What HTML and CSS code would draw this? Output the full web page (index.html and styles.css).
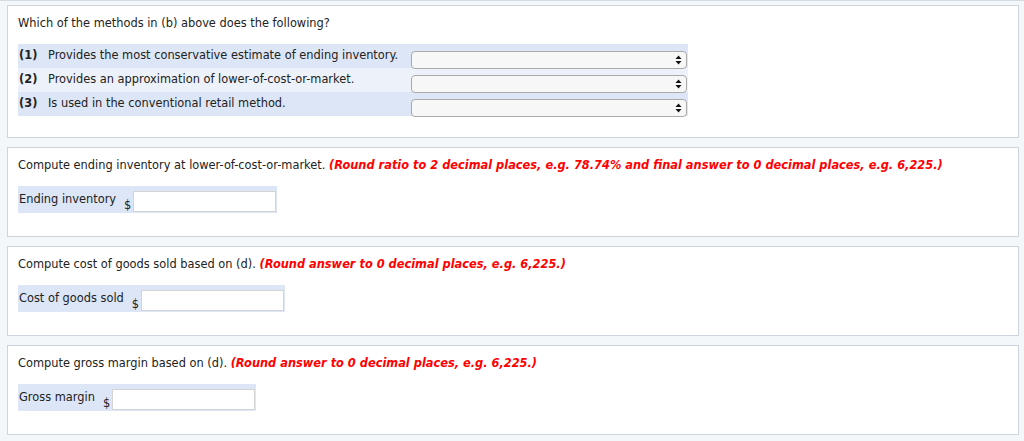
FILE: index.html
```html
<!DOCTYPE html>
<html lang="en">
<head>
<meta charset="utf-8">
<title>Inventory methods</title>
<link rel="stylesheet" href="styles.css">
</head>
<body>
<div class="page">
  <section class="box box-first">
    <p class="prompt">Which of the methods in (b) above does the following?</p>
    <div class="choices">
      <div class="choice dark">
        <span class="num">(1)</span>
        <span class="desc">Provides the most conservative estimate of ending inventory.</span>
        <div class="select"><svg width="7" height="10" viewBox="0 0 7 10"><path d="M3.5 0.5 L6.5 4 L0.5 4 Z M3.5 9.5 L6.5 6 L0.5 6 Z" fill="#111"/></svg></div>
      </div>
      <div class="choice light">
        <span class="num">(2)</span>
        <span class="desc">Provides an approximation of lower-of-cost-or-market.</span>
        <div class="select"><svg width="7" height="10" viewBox="0 0 7 10"><path d="M3.5 0.5 L6.5 4 L0.5 4 Z M3.5 9.5 L6.5 6 L0.5 6 Z" fill="#111"/></svg></div>
      </div>
      <div class="choice dark">
        <span class="num">(3)</span>
        <span class="desc">Is used in the conventional retail method.</span>
        <div class="select"><svg width="7" height="10" viewBox="0 0 7 10"><path d="M3.5 0.5 L6.5 4 L0.5 4 Z M3.5 9.5 L6.5 6 L0.5 6 Z" fill="#111"/></svg></div>
      </div>
    </div>
  </section>

  <section class="box">
    <p class="prompt">Compute ending inventory at lower-of-cost-or-market. <em class="note">(Round ratio to 2 decimal places, e.g. 78.74% and final answer to 0 decimal places, e.g. 6,225.)</em></p>
    <div class="answer">
      <span class="label">Ending inventory</span>
      <span class="dollar">$</span>
      <input class="field" type="text" aria-label="Ending inventory">
    </div>
  </section>

  <section class="box">
    <p class="prompt">Compute cost of goods sold based on (d). <em class="note">(Round answer to 0 decimal places, e.g. 6,225.)</em></p>
    <div class="answer">
      <span class="label">Cost of goods sold</span>
      <span class="dollar">$</span>
      <input class="field" type="text" aria-label="Cost of goods sold">
    </div>
  </section>

  <section class="box">
    <p class="prompt">Compute gross margin based on (d). <em class="note">(Round answer to 0 decimal places, e.g. 6,225.)</em></p>
    <div class="answer">
      <span class="label">Gross margin</span>
      <span class="dollar">$</span>
      <input class="field" type="text" aria-label="Gross margin">
    </div>
  </section>
</div>
</body>
</html>
```

FILE: styles.css
```css
html, body {
  margin: 0;
  padding: 0;
}
body {
  background: #f4f7fa;
  font-family: "DejaVu Sans", Verdana, sans-serif;
  font-size: 11.4px;
  color: #222;
  border-top: 1px solid #d6dce3;
}
.page {
  padding: 4px 5px 0 7px;
  display: flex;
  flex-direction: column;
  gap: 9px;
}
.box {
  background: #fff;
  border: 1px solid #cdd4dd;
  padding: 10px 10px 22px 10px;
  box-sizing: border-box;
  height: 90px;
}
.box-first {
  height: 133px;
}
.prompt {
  margin: 0;
  line-height: 14px;
}
.note {
  color: #f00;
  font-weight: bold;
  font-style: italic;
}
.choices {
  margin-top: 14px;
  width: 670px;
}
.choice {
  display: flex;
  align-items: flex-start;
  height: 24px;
}
.choice.dark { background: #dce6f6; }
.choice.light { background: #edf2fa; }
.num {
  width: 30px;
  padding-left: 1px;
  box-sizing: border-box;
  font-weight: bold;
  line-height: 14px;
  padding-top: 4px;
  flex: none;
}
.desc {
  width: 363px;
  line-height: 14px;
  padding-top: 4px;
  flex: none;
}
.select {
  width: 276px;
  height: 18px;
  margin-top: 7px;
  box-sizing: border-box;
  border: 1px solid #aaa;
  border-radius: 4px;
  background: #f7f7f7;
  display: flex;
  align-items: center;
  justify-content: flex-end;
  padding-right: 4px;
  flex: none;
}
.answer {
  margin-top: 14px;
  display: inline-flex;
  align-items: flex-end;
  background: #dce6f6;
  padding: 5px 1px 1px 0;
}
.label {
  align-self: flex-start;
  line-height: 14px;
  padding-left: 1px;
  margin-top: 1px;
  margin-right: 8px;
}
.dollar {
  line-height: 14px;
  margin-right: 2px;
}
.field {
  width: 143px;
  height: 21px;
  box-sizing: border-box;
  border: 1px solid #d4d4d4;
  background: #fff;
  margin: 0;
  padding: 0 3px;
  font: inherit;
}
```
